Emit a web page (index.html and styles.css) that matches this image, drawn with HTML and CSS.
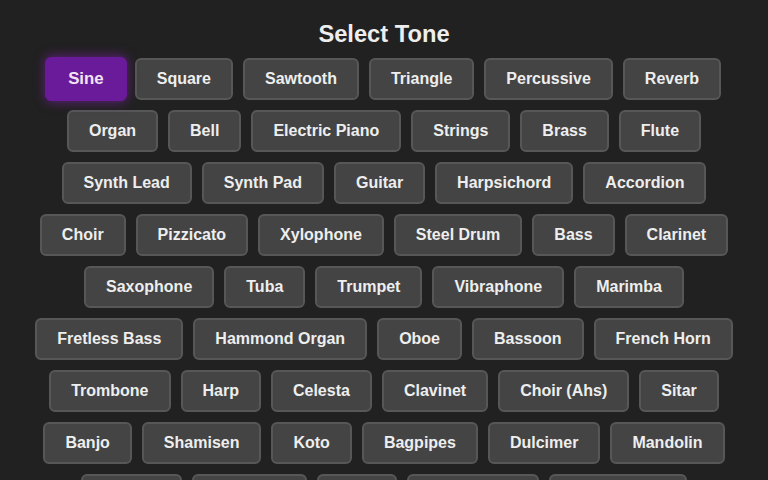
FILE: index.html
```html
<!DOCTYPE html>
<html lang="en">
<head>
<meta charset="utf-8">
<title>Select Tone</title>
<link rel="stylesheet" href="styles.css">
</head>
<body>
<main class="picker">
  <h1 class="title">Select Tone</h1>
  <div class="tones">
    <button class="tone active">Sine</button>
    <button class="tone">Square</button>
    <button class="tone">Sawtooth</button>
    <button class="tone">Triangle</button>
    <button class="tone">Percussive</button>
    <button class="tone">Reverb</button>
    <button class="tone">Organ</button>
    <button class="tone">Bell</button>
    <button class="tone">Electric Piano</button>
    <button class="tone">Strings</button>
    <button class="tone">Brass</button>
    <button class="tone">Flute</button>
    <button class="tone">Synth Lead</button>
    <button class="tone">Synth Pad</button>
    <button class="tone">Guitar</button>
    <button class="tone">Harpsichord</button>
    <button class="tone">Accordion</button>
    <button class="tone">Choir</button>
    <button class="tone">Pizzicato</button>
    <button class="tone">Xylophone</button>
    <button class="tone">Steel Drum</button>
    <button class="tone">Bass</button>
    <button class="tone">Clarinet</button>
    <button class="tone">Saxophone</button>
    <button class="tone">Tuba</button>
    <button class="tone">Trumpet</button>
    <button class="tone">Vibraphone</button>
    <button class="tone">Marimba</button>
    <button class="tone">Fretless Bass</button>
    <button class="tone">Hammond Organ</button>
    <button class="tone">Oboe</button>
    <button class="tone">Bassoon</button>
    <button class="tone">French Horn</button>
    <button class="tone">Trombone</button>
    <button class="tone">Harp</button>
    <button class="tone">Celesta</button>
    <button class="tone">Clavinet</button>
    <button class="tone">Choir (Ahs)</button>
    <button class="tone">Sitar</button>
    <button class="tone">Banjo</button>
    <button class="tone">Shamisen</button>
    <button class="tone">Koto</button>
    <button class="tone">Bagpipes</button>
    <button class="tone">Dulcimer</button>
    <button class="tone">Mandolin</button>
    <button class="tone">Ukulele</button>
    <button class="tone">Recorder</button>
    <button class="tone">Erhu</button>
    <button class="tone">Contrabass</button>
    <button class="tone">Synth Brass</button>
  </div>
</main>
</body>
</html>
```
FILE: styles.css
```css
html, body {
  margin: 0;
  padding: 0;
  background: #212121;
  color: #eeeeee;
  font-family: "Liberation Sans", Arial, sans-serif;
}

.picker {
  padding: 21px 20px 20px;
}

.title {
  margin: 0 0 10px;
  text-align: center;
  font-size: 23.7px;
  font-weight: bold;
  line-height: 27px;
  color: #eeeeee;
}

.tones {
  display: flex;
  flex-wrap: wrap;
  justify-content: center;
  gap: 10px;
}

.tone {
  font-family: "Liberation Sans", Arial, sans-serif;
  font-size: 16px;
  font-weight: bold;
  line-height: 18px;
  padding: 10px 20px;
  border: 2px solid #575757;
  border-radius: 6px;
  background: #444444;
  color: #eeeeee;
  cursor: pointer;
}

.tone.active {
  background: #6a1b9a;
  border-color: #6a1b9a;
  color: #f3e5f5;
  transform: scale(1.05);
  box-shadow: 0 0 10px rgba(123, 31, 162, 0.7);
}
```
